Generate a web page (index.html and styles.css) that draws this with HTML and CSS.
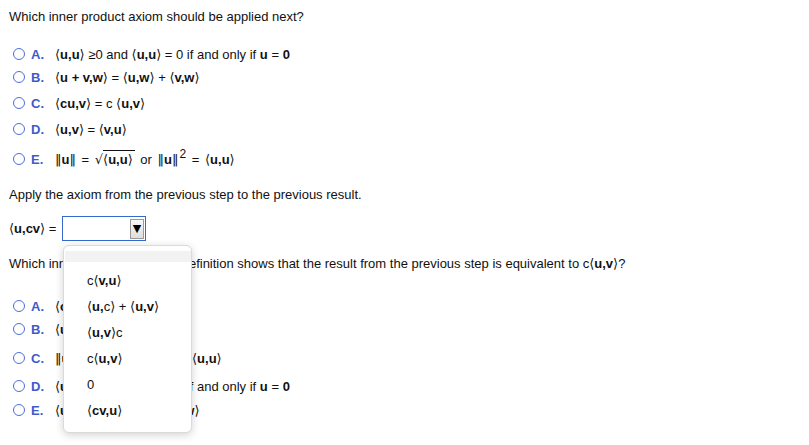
FILE: index.html
```html
<!DOCTYPE html>
<html>
<head>
<meta charset="utf-8">
<link rel="stylesheet" href="styles.css">
</head>
<body>
<div class="page">
  <div class="q q1">Which inner product axiom should be applied next?</div>

  <div class="opts opts1">
    <div class="opt h20"><span class="radio"></span><span class="lab">A.</span><span class="m"><span class="ang">⟨</span><b>u,u</b><span class="ang">⟩</span> ≥0 and <span class="ang">⟨</span><b>u,u</b><span class="ang">⟩</span> = 0 if and only if <b>u</b> = <b>0</b></span></div>
    <div class="opt h26"><span class="radio"></span><span class="lab">B.</span><span class="m"><span class="ang">⟨</span><b>u + v,w</b><span class="ang">⟩</span> = <span class="ang">⟨</span><b>u,w</b><span class="ang">⟩</span> + <span class="ang">⟨</span><b>v,w</b><span class="ang">⟩</span></span></div>
    <div class="opt h26"><span class="radio"></span><span class="lab">C.</span><span class="m"><span class="ang">⟨</span><b>cu,v</b><span class="ang">⟩</span> = c <span class="ang">⟨</span><b>u,v</b><span class="ang">⟩</span></span></div>
    <div class="opt h26"><span class="radio"></span><span class="lab">D.</span><span class="m"><span class="ang">⟨</span><b>u,v</b><span class="ang">⟩</span> = <span class="ang">⟨</span><b>v,u</b><span class="ang">⟩</span></span></div>
    <div class="opt h34"><span class="radio"></span><span class="lab">E.</span><span class="m ws2"><span class="nrm">‖</span><b>u</b><span class="nrm">‖</span> = <span class="sq">√</span><span class="ov"><span class="ang">⟨</span><b>u,u</b><span class="ang">⟩</span></span> or <span class="nrm">‖</span><b>u</b><span class="nrm">‖</span><sup>2</sup> = <span class="ang">⟨</span><b>u,u</b><span class="ang">⟩</span></span></div>
  </div>

  <div class="q q2">Apply the axiom from the previous step to the previous result.</div>

  <div class="ans">
    <span class="m"><span class="ang">⟨</span><b>u,cv</b><span class="ang">⟩</span> =</span>
    <div class="sel"><span class="arrow">▼</span></div>
  </div>

  <div class="q q3">Which inner product axiom or definition shows that the result from the previous step is equivalent to c<span class="ang">⟨</span><b>u,v</b><span class="ang">⟩</span>?</div>

  <div class="opts opts2">
    <div class="opt h20"><span class="radio"></span><span class="lab">A.</span><span class="m"><span class="ang">⟨</span><b>cu,v</b><span class="ang">⟩</span> = c <span class="ang">⟨</span><b>u,v</b><span class="ang">⟩</span></span></div>
    <div class="opt h26"><span class="radio"></span><span class="lab">B.</span><span class="m"><span class="ang">⟨</span><b>u,v</b><span class="ang">⟩</span> = <span class="ang">⟨</span><b>v,u</b><span class="ang">⟩</span></span></div>
    <div class="opt h32"><span class="radio"></span><span class="lab">C.</span><span class="m"><span class="nrm">‖</span><b>u</b><span class="nrm">‖</span> = <span class="sq">√</span><span class="ov"><span class="ang">⟨</span><b>u,u</b><span class="ang">⟩</span></span> or <span class="nrm">‖</span><b>u</b><span class="nrm">‖</span><sup>2</sup> = <span class="ang">⟨</span><b>u,u</b><span class="ang">⟩</span></span></div>
    <div class="opt h24"><span class="radio"></span><span class="lab">D.</span><span class="m"><span class="ang">⟨</span><b>u,u</b><span class="ang">⟩</span> ≥0 and <span class="ang">⟨</span><b>u,u</b><span class="ang">⟩</span> = 0 if and only if <b>u</b> = <b>0</b></span></div>
    <div class="opt h24"><span class="radio"></span><span class="lab">E.</span><span class="m"><span class="ang">⟨</span><b>u + v,w</b><span class="ang">⟩</span> = <span class="ang">⟨</span><b>u,w</b><span class="ang">⟩</span> + <span class="ang">⟨</span><b>v,w</b><span class="ang">⟩</span></span></div>
  </div>

  <div class="menu">
    <div class="blank"></div>
    <div class="item">c<span class="ang">⟨</span><b>v,u</b><span class="ang">⟩</span></div>
    <div class="item"><span class="ang">⟨</span><b>u,</b>c<span class="ang">⟩</span> + <span class="ang">⟨</span><b>u,v</b><span class="ang">⟩</span></div>
    <div class="item"><span class="ang">⟨</span><b>u,v</b><span class="ang">⟩</span>c</div>
    <div class="item">c<span class="ang">⟨</span><b>u,v</b><span class="ang">⟩</span></div>
    <div class="item">0</div>
    <div class="item"><span class="ang">⟨</span><b>cv,u</b><span class="ang">⟩</span></div>
  </div>
</div>
</body>
</html>
```

FILE: styles.css
```css
html, body {
  margin: 0;
  padding: 0;
  background: #ffffff;
}
body {
  font-family: "Liberation Sans", Arial, sans-serif;
  font-size: 13px;
  color: #111111;
}
.page {
  position: relative;
  width: 809px;
  height: 445px;
  overflow: hidden;
  padding: 9px 0 0 9px;
  box-sizing: border-box;
  display: flex;
  flex-direction: column;
}
.q {
  line-height: 16px;
  height: 16px;
  white-space: nowrap;
}
.opts {
  display: flex;
  flex-direction: column;
  margin-left: 4px;
}
.opts1 { margin-top: 19px; }
.opts2 { margin-top: 24px; }
.opt {
  display: flex;
  align-items: center;
  white-space: nowrap;
}
.h20 { height: 20px; }
.h24 { height: 24px; }
.h26 { height: 26px; }
.h32 { height: 32px; }
.h34 { height: 34px; }
.radio {
  width: 12px;
  height: 12px;
  box-sizing: border-box;
  border: 1.3px solid #4d6fd6;
  border-radius: 50%;
  background: #fff;
  flex: none;
}
.lab {
  color: #3d5ccc;
  font-weight: bold;
  width: 24px;
  margin-left: 6px;
  flex: none;
}
.m b { font-weight: bold; }
.ws2 { word-spacing: 2px; }
.ang {
  font-family: "DejaVu Sans", "Noto Sans", sans-serif;
  font-size: 13px;
  font-weight: normal;
}
.nrm {
  font-family: "DejaVu Sans", sans-serif;
  font-size: 13px;
}
.sq {
  font-family: "DejaVu Sans", sans-serif;
  font-size: 13px;
}
.ov {
  border-top: 1px solid #111;
  padding-top: 1px;
  padding-right: 2px;
}
sup {
  font-size: 12px;
  vertical-align: 6px;
  line-height: 0;
}
.ws2 sup { padding-left: 1px; }
.q2 { margin-top: 11px; }
.ans {
  margin-top: 13px;
  display: flex;
  align-items: center;
  height: 25px;
}
.ans .m { width: 53px; }
.sel {
  width: 84px;
  height: 25px;
  box-sizing: border-box;
  border: 1px solid #3569cf;
  display: flex;
  justify-content: flex-end;
  align-items: center;
  padding-right: 1px;
}
.arrow {
  width: 14px;
  height: 20px;
  box-sizing: border-box;
  border: 1px solid #9a9a9a;
  background: linear-gradient(#f8f8f8, #dedede);
  font-family: "DejaVu Sans", sans-serif;
  font-size: 11px;
  line-height: 18px;
  text-align: center;
  color: #000;
}
.q3 { margin-top: 15px; }
.menu {
  position: absolute;
  left: 63px;
  top: 245px;
  width: 129px;
  height: 188px;
  box-sizing: border-box;
  background: #fff;
  border: 1px solid #dadada;
  border-radius: 6px;
  box-shadow: 0 2px 8px rgba(0, 0, 0, 0.18);
  padding-top: 5px;
  overflow: hidden;
}
.blank {
  height: 11px;
  background: #f2f2f2;
  margin-left: 1px;
}
.menu .item {
  height: 26px;
  line-height: 26px;
  padding-left: 23px;
  white-space: nowrap;
}
.menu .blank + .item { margin-top: 6px; }
```
